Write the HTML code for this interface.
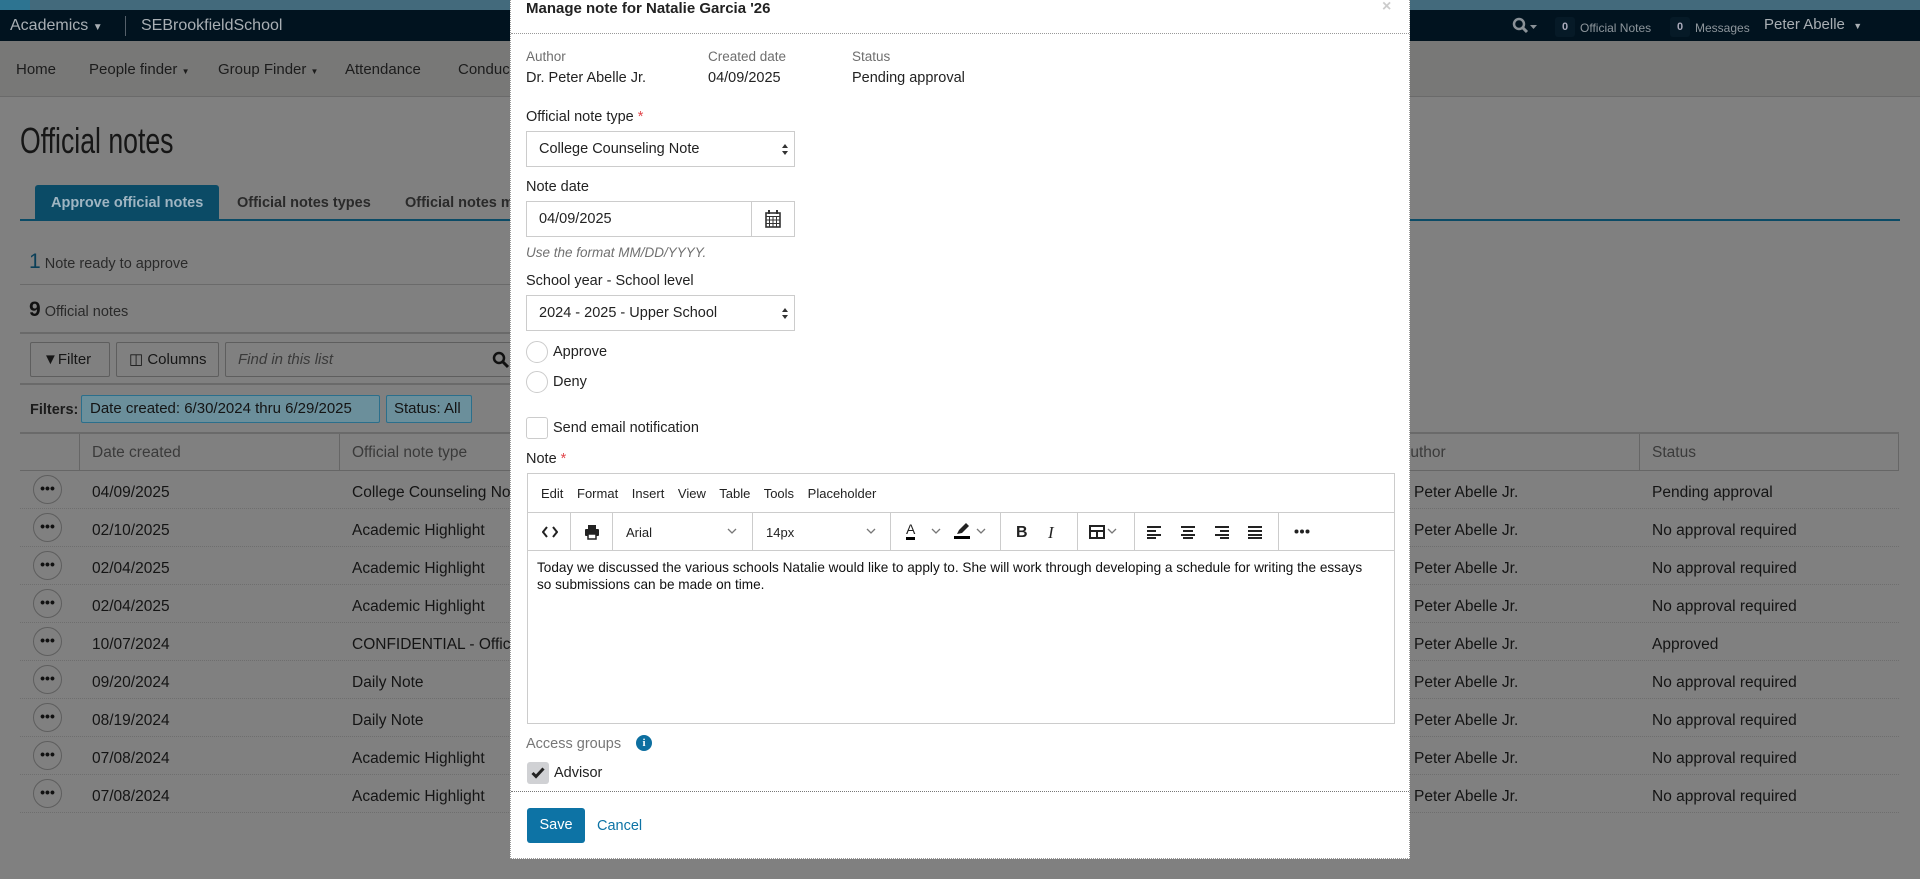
<!DOCTYPE html>
<html><head><meta charset="utf-8"><style>
*{box-sizing:border-box;margin:0;padding:0}
body{width:1920px;height:879px;overflow:hidden;background:#808080;font-family:"Liberation Sans",sans-serif;position:relative;color:#111}
.a{position:absolute;white-space:nowrap}
.row{position:absolute;left:20px;width:1879px;height:38px;border-bottom:1px dotted #6e6e6e}
.ell{position:absolute;left:13px;top:4px;width:29px;height:29px;border:1px solid #5e5e5e;border-radius:50%;text-align:center;font-size:14px;line-height:24px;font-weight:bold;color:#111}
.c{position:absolute;top:13px;font-size:15.5px;color:#141414}
.m{font-size:14.5px}
.lbl{color:#6e6e6e}
.sel{position:absolute;border:1px solid #ccc;background:#fff;font-size:14.5px;padding-left:12px;line-height:34px;color:#222}
.arr{position:absolute;right:6px;top:12px;width:6px;height:11px}
.tb{position:absolute;top:513px;height:38px;border-right:1px solid #ccc}
</style></head><body>
<div class="a" style="left:0;top:0;width:1920px;height:10px;background:#436a7c"></div>
<div class="a" style="left:0;top:0;width:30px;height:10px;background:#2d7491"></div>
<div class="a" style="left:0;top:10px;width:1920px;height:31px;background:#01131f"></div>
<div class="a" style="left:10px;top:17px;font-size:16px;color:#a9afb4">Academics <span style="font-size:10px">&#9660;</span></div>
<div class="a" style="left:125px;top:16px;width:1px;height:20px;background:#55606a"></div>
<div class="a" style="left:141px;top:17px;font-size:16px;color:#a9afb4">SEBrookfieldSchool</div>
<svg class="a" style="left:1512px;top:17px" width="26" height="18" viewBox="0 0 26 18"><circle cx="7" cy="7" r="5" fill="none" stroke="#8a9197" stroke-width="2.5"/><path d="M10.5 10.5L15 15" stroke="#8a9197" stroke-width="3"/><path d="M18 8H25L21.5 12Z" fill="#8a9197"/></svg>
<div class="a" style="left:1555px;top:17px;width:20px;height:20px;background:#061a27;border-radius:3px;color:#aab;font-size:11px;font-weight:bold;text-align:center;line-height:20px">0</div>
<div class="a" style="left:1580px;top:21px;font-size:12px;color:#8e969c">Official Notes</div>
<div class="a" style="left:1670px;top:17px;width:20px;height:20px;background:#061a27;border-radius:3px;color:#aab;font-size:11px;font-weight:bold;text-align:center;line-height:20px">0</div>
<div class="a" style="left:1695px;top:21px;font-size:12px;color:#8e969c">Messages</div>
<div class="a" style="left:1764px;top:16px;font-size:15px;color:#a9afb4">Peter Abelle &nbsp;<span style="font-size:9px">&#9660;</span></div>
<div class="a" style="left:0;top:41px;width:1920px;height:56px;background:#787877;border-bottom:1px solid #6a6a6a"></div>
<div class="a" style="top:61px;left:16px;font-size:15px;color:#1c1c1c">Home</div>
<div class="a" style="top:61px;left:89px;font-size:15px;color:#1c1c1c">People finder <span style="font-size:8px">&#9660;</span></div>
<div class="a" style="top:61px;left:218px;font-size:15px;color:#1c1c1c">Group Finder <span style="font-size:8px">&#9660;</span></div>
<div class="a" style="top:61px;left:345px;font-size:15px;color:#1c1c1c">Attendance</div>
<div class="a" style="top:61px;left:458px;font-size:15px;color:#1c1c1c">Conduct</div>
<div class="a" style="left:20px;top:120px;font-size:36px;color:#161616;transform:scaleX(.74);transform-origin:left">Official notes</div>
<div class="a" style="left:35px;top:185px;width:184px;height:36px;background:#0b4b66;border-radius:3px 3px 0 0"></div>
<div class="a" style="left:51px;top:195px;font-size:14.5px;font-weight:bold;color:#9fb5c2">Approve official notes</div>
<div class="a" style="left:237px;top:195px;font-size:14.5px;font-weight:bold;color:#2a2a2a">Official notes types</div>
<div class="a" style="left:405px;top:195px;font-size:14.5px;font-weight:bold;color:#2a2a2a">Official notes m</div>
<div class="a" style="left:20px;top:219px;width:1880px;height:2px;background:#0b4b66"></div>
<div class="a" style="left:29px;top:250px;font-size:14.5px;color:#2a2a2a"><span style="font-size:21px;color:#0b3f58">1</span> Note ready to approve</div>
<div class="a" style="left:20px;top:284px;width:500px;height:1px;background:#6a6a6a"></div>
<div class="a" style="left:29px;top:298px;font-size:14.5px;color:#2a2a2a"><span style="font-size:21px;font-weight:bold;color:#111">9</span> Official notes</div>
<div class="a" style="left:20px;top:332px;width:500px;height:2px;background:#6a6a6a"></div>
<div class="a" style="left:30px;top:342px;width:80px;height:35px;border:1px solid #5e5e5e;border-radius:2px;font-size:15px;line-height:33px;padding-left:12px;color:#161616">&#9660;Filter</div>
<div class="a" style="left:116px;top:342px;width:103px;height:35px;border:1px solid #5e5e5e;border-radius:2px;font-size:15px;line-height:33px;padding-left:12px;color:#161616">&#9707; Columns</div>
<div class="a" style="left:225px;top:342px;width:300px;height:35px;border:1px solid #5e5e5e;border-radius:2px;font-size:15px;line-height:33px;padding-left:12px;color:#3a3a3a;font-style:italic">Find in this list</div>
<svg class="a" style="left:492px;top:351px" width="18" height="18" viewBox="0 0 18 18"><circle cx="7" cy="7" r="5" fill="none" stroke="#111" stroke-width="2.5"/><path d="M10.5 10.5L16 16" stroke="#111" stroke-width="3"/></svg>
<div class="a" style="left:20px;top:383px;width:500px;height:2px;background:#6a6a6a"></div>
<div class="a" style="left:30px;top:402px;font-size:14.5px;font-weight:bold;color:#1c1c1c">Filters:</div>
<div class="a" style="left:81px;top:395px;width:299px;height:28px;background:#6b8f9b;border:1px solid #2b6f8c;border-radius:2px;font-size:15px;line-height:26px;padding-left:8px;color:#141414">Date created: 6/30/2024 thru 6/29/2025</div>
<div class="a" style="left:386px;top:395px;width:86px;height:28px;background:#6b8f9b;border:1px solid #2b6f8c;border-radius:2px;font-size:15px;line-height:26px;padding-left:7px;color:#141414">Status: All</div>
<div class="a" style="left:20px;top:432px;width:1879px;height:2px;background:#6a6a6a"></div>
<div class="a" style="left:20px;top:434px;width:1879px;height:37px;border-bottom:1px solid #666;border-right:1px solid #666"></div>
<div class="a" style="left:79px;top:434px;width:1px;height:37px;background:#666"></div>
<div class="a" style="left:339px;top:434px;width:1px;height:37px;background:#666"></div>
<div class="a" style="left:1639px;top:434px;width:1px;height:37px;background:#666"></div>
<div class="a" style="left:92px;top:444px;font-size:15.5px;color:#3a3a3a">Date created</div>
<div class="a" style="left:352px;top:444px;font-size:15.5px;color:#3a3a3a">Official note type</div>
<div class="a" style="left:1400px;top:444px;font-size:15.5px;color:#3a3a3a">Author</div>
<div class="a" style="left:1652px;top:444px;font-size:15.5px;color:#3a3a3a">Status</div>
<div class="row" style="top:471px"><div class="ell">•••</div><div class="c" style="left:72px">04/09/2025</div><div class="c" style="left:332px">College Counseling Note</div><div class="c" style="left:1394px">Peter Abelle Jr.</div><div class="c" style="left:1632px">Pending approval</div></div>
<div class="row" style="top:509px"><div class="ell">•••</div><div class="c" style="left:72px">02/10/2025</div><div class="c" style="left:332px">Academic Highlight</div><div class="c" style="left:1394px">Peter Abelle Jr.</div><div class="c" style="left:1632px">No approval required</div></div>
<div class="row" style="top:547px"><div class="ell">•••</div><div class="c" style="left:72px">02/04/2025</div><div class="c" style="left:332px">Academic Highlight</div><div class="c" style="left:1394px">Peter Abelle Jr.</div><div class="c" style="left:1632px">No approval required</div></div>
<div class="row" style="top:585px"><div class="ell">•••</div><div class="c" style="left:72px">02/04/2025</div><div class="c" style="left:332px">Academic Highlight</div><div class="c" style="left:1394px">Peter Abelle Jr.</div><div class="c" style="left:1632px">No approval required</div></div>
<div class="row" style="top:623px"><div class="ell">•••</div><div class="c" style="left:72px">10/07/2024</div><div class="c" style="left:332px">CONFIDENTIAL - Office</div><div class="c" style="left:1394px">Peter Abelle Jr.</div><div class="c" style="left:1632px">Approved</div></div>
<div class="row" style="top:661px"><div class="ell">•••</div><div class="c" style="left:72px">09/20/2024</div><div class="c" style="left:332px">Daily Note</div><div class="c" style="left:1394px">Peter Abelle Jr.</div><div class="c" style="left:1632px">No approval required</div></div>
<div class="row" style="top:699px"><div class="ell">•••</div><div class="c" style="left:72px">08/19/2024</div><div class="c" style="left:332px">Daily Note</div><div class="c" style="left:1394px">Peter Abelle Jr.</div><div class="c" style="left:1632px">No approval required</div></div>
<div class="row" style="top:737px"><div class="ell">•••</div><div class="c" style="left:72px">07/08/2024</div><div class="c" style="left:332px">Academic Highlight</div><div class="c" style="left:1394px">Peter Abelle Jr.</div><div class="c" style="left:1632px">No approval required</div></div>
<div class="row" style="top:775px"><div class="ell">•••</div><div class="c" style="left:72px">07/08/2024</div><div class="c" style="left:332px">Academic Highlight</div><div class="c" style="left:1394px">Peter Abelle Jr.</div><div class="c" style="left:1632px">No approval required</div></div>

<div class="a" style="left:510px;top:0;width:900px;height:859px;background:#fff;border:1px dotted #999;border-top:none">
 <div class="a" style="left:15px;top:0;font-size:15px;font-weight:bold;color:#222">Manage note for Natalie Garcia '26</div>
 <div class="a" style="left:871px;top:-2px;font-size:16px;color:#ccc;font-weight:bold">×</div>
 <div class="a" style="left:0;top:33px;width:898px;border-top:1px dotted #999"></div>
 <div class="a m lbl" style="left:15px;top:49px;font-size:13.5px">Author</div>
 <div class="a m" style="left:15px;top:70px;color:#222">Dr. Peter Abelle Jr.</div>
 <div class="a m lbl" style="left:197px;top:49px;font-size:13.5px">Created date</div>
 <div class="a m" style="left:197px;top:70px;color:#222">04/09/2025</div>
 <div class="a m lbl" style="left:341px;top:49px;font-size:13.5px">Status</div>
 <div class="a m" style="left:341px;top:70px;color:#222">Pending approval</div>
 <div class="a m" style="left:15px;top:109px;color:#222">Official note type <span style="color:#e0474c">*</span></div>
 <div class="sel" style="left:15px;top:131px;width:269px;height:36px">College Counseling Note<svg class="arr" viewBox="0 0 6 11"><path d="M0 4L3 0L6 4ZM0 7L3 11L6 7Z" fill="#333"/></svg></div>
 <div class="a m" style="left:15px;top:179px;color:#222">Note date</div>
 <div class="sel" style="left:15px;top:201px;width:269px;height:36px">04/09/2025</div>
 <div class="a" style="left:240px;top:201px;width:44px;height:36px;border-left:1px solid #ccc"></div>
 <svg class="a" style="left:254px;top:210px" width="16" height="18" viewBox="0 0 16 18"><rect x="1" y="3" width="14" height="14" fill="none" stroke="#333" stroke-width="1.6"/><path d="M1 6.5H15M1 10H15M1 13.5H15M4.5 6V17M8 6V17M11.5 6V17" stroke="#333" stroke-width="1"/><rect x="3" y="0" width="2" height="4" fill="#333"/><rect x="11" y="0" width="2" height="4" fill="#333"/></svg>
 <div class="a" style="left:15px;top:245px;font-size:13.5px;font-style:italic;color:#707070">Use the format MM/DD/YYYY.</div>
 <div class="a m" style="left:15px;top:273px;color:#222">School year - School level</div>
 <div class="sel" style="left:15px;top:295px;width:269px;height:36px">2024 - 2025 - Upper School<svg class="arr" viewBox="0 0 6 11"><path d="M0 4L3 0L6 4ZM0 7L3 11L6 7Z" fill="#333"/></svg></div>
 <div class="a" style="left:15px;top:341px;width:22px;height:22px;border:1px solid #ccc;border-radius:50%"></div>
 <div class="a m" style="left:42px;top:344px;color:#222">Approve</div>
 <div class="a" style="left:15px;top:371px;width:22px;height:22px;border:1px solid #ccc;border-radius:50%"></div>
 <div class="a m" style="left:42px;top:374px;color:#222">Deny</div>
 <div class="a" style="left:15px;top:417px;width:22px;height:22px;border:1px solid #ccc;border-radius:3px"></div>
 <div class="a m" style="left:42px;top:420px;color:#222">Send email notification</div>
 <div class="a m" style="left:15px;top:451px;color:#222">Note <span style="color:#e0474c">*</span></div>
 <div class="a" style="left:16px;top:473px;width:868px;height:251px;border:1px solid #ccc"></div>
 <div class="a" style="left:16px;top:512px;width:868px;height:1px;background:#ccc"></div>
 <div class="a" style="left:16px;top:550px;width:868px;height:1px;background:#ccc"></div>
 <div class="a" style="left:30px;top:486px;font-size:13px;color:#222;word-spacing:10px">Edit Format Insert View Table Tools Placeholder</div>
 <div class="tb" style="left:16px;width:44px"></div>
 <div class="tb" style="left:60px;width:42px"></div>
 <div class="tb" style="left:102px;width:140px"></div>
 <div class="tb" style="left:242px;width:138px"></div>
 <div class="tb" style="left:380px;width:110px"></div>
 <div class="tb" style="left:490px;width:77px"></div>
 <div class="tb" style="left:567px;width:57px"></div>
 <div class="tb" style="left:624px;width:144px"></div>
 <svg class="a" style="left:31px;top:526px" width="16" height="12" viewBox="0 0 16 12"><path d="M5 1L1 6L5 11M11 1L15 6L11 11" fill="none" stroke="#222" stroke-width="2"/></svg>
 <svg class="a" style="left:73px;top:524px" width="16" height="16" viewBox="0 0 16 16"><rect x="4" y="1" width="8" height="4" fill="#222"/><rect x="1" y="5" width="14" height="7" rx="1" fill="#222"/><rect x="4" y="10" width="8" height="5" fill="#fff" stroke="#222" stroke-width="1.5"/></svg>
 <div class="a" style="left:115px;top:525px;font-size:13px;color:#222">Arial</div>
 <svg class="a" style="left:216px;top:528px" width="10" height="7" viewBox="0 0 10 7"><path d="M1 1L5 5L9 1" fill="none" stroke="#777" stroke-width="1.3"/></svg>
 <div class="a" style="left:255px;top:525px;font-size:13px;color:#222">14px</div>
 <svg class="a" style="left:355px;top:528px" width="10" height="7" viewBox="0 0 10 7"><path d="M1 1L5 5L9 1" fill="none" stroke="#777" stroke-width="1.3"/></svg>
 <div class="a" style="left:395px;top:522px;font-size:14px;color:#222;border-bottom:3px solid #000;line-height:15px">A</div>
 <svg class="a" style="left:420px;top:528px" width="10" height="7" viewBox="0 0 10 7"><path d="M1 1L5 5L9 1" fill="none" stroke="#777" stroke-width="1.3"/></svg>
 <svg class="a" style="left:443px;top:522px" width="16" height="18" viewBox="0 0 16 18"><path d="M3 12L5 8L12 1L15 4L8 11Z" fill="#222"/><rect x="0" y="14" width="16" height="3" fill="#000"/></svg>
 <svg class="a" style="left:465px;top:528px" width="10" height="7" viewBox="0 0 10 7"><path d="M1 1L5 5L9 1" fill="none" stroke="#777" stroke-width="1.3"/></svg>
 <div class="a" style="left:505px;top:524px;font-size:16px;font-weight:bold;color:#222">B</div>
 <div class="a" style="left:537px;top:523px;font-size:17px;font-style:italic;font-family:'Liberation Serif',serif;color:#222">I</div>
 <svg class="a" style="left:578px;top:525px" width="16" height="14" viewBox="0 0 16 14"><rect x="1" y="1" width="14" height="12" fill="none" stroke="#222" stroke-width="2"/><path d="M1 6H15M8 6V13" stroke="#222" stroke-width="2"/></svg>
 <svg class="a" style="left:596px;top:528px" width="10" height="7" viewBox="0 0 10 7"><path d="M1 1L5 5L9 1" fill="none" stroke="#777" stroke-width="1.3"/></svg>
 <svg class="a" style="left:636px;top:525px" width="130" height="14" viewBox="0 0 130 14"><g fill="#222"><rect x="0" y="1" width="14" height="2"/><rect x="0" y="5" width="9" height="2"/><rect x="0" y="9" width="14" height="2"/><rect x="0" y="12" width="9" height="2"/><rect x="34" y="1" width="14" height="2"/><rect x="36" y="5" width="10" height="2"/><rect x="34" y="9" width="14" height="2"/><rect x="36" y="12" width="10" height="2"/><rect x="68" y="1" width="14" height="2"/><rect x="73" y="5" width="9" height="2"/><rect x="68" y="9" width="14" height="2"/><rect x="73" y="12" width="9" height="2"/><rect x="101" y="1" width="14" height="2"/><rect x="101" y="5" width="14" height="2"/><rect x="101" y="9" width="14" height="2"/><rect x="101" y="12" width="14" height="2"/></g></svg>
 <svg class="a" style="left:783px;top:529px" width="16" height="5" viewBox="0 0 16 5"><circle cx="2.5" cy="2.5" r="2" fill="#222"/><circle cx="8" cy="2.5" r="2" fill="#222"/><circle cx="13.5" cy="2.5" r="2" fill="#222"/></svg>
 <div class="a" style="left:26px;top:559px;font-size:13.6px;line-height:17px;color:#111">Today we discussed the various schools Natalie would like to apply to. She will work through developing a schedule for writing the essays<br>so submissions can be made on time.</div>
 <div class="a" style="left:15px;top:736px;font-size:14.5px;color:#777">Access groups</div>
 <div class="a" style="left:125px;top:735px;width:16px;height:16px;border-radius:50%;background:#0d6fa0;color:#fff;font-size:11px;font-weight:bold;text-align:center;line-height:16px;font-family:'Liberation Serif',serif">i</div>
 <div class="a" style="left:16px;top:762px;width:22px;height:22px;background:#d0d1d4;border-radius:3px"></div>
 <svg class="a" style="left:20px;top:767px" width="14" height="12" viewBox="0 0 14 12"><path d="M1.5 6L5 9.5L12.5 1.5" fill="none" stroke="#222" stroke-width="3"/></svg>
 <div class="a m" style="left:43px;top:765px;color:#222">Advisor</div>
 <div class="a" style="left:0;top:791px;width:898px;border-top:1px dotted #777"></div>
 <div class="a" style="left:16px;top:808px;width:58px;height:35px;background:#0d73a5;border-radius:3px;color:#fff;font-size:14.5px;text-align:center;line-height:35px">Save</div>
 <div class="a" style="left:86px;top:818px;font-size:14.5px;color:#0d73a5">Cancel</div>
</div>
</body></html>
